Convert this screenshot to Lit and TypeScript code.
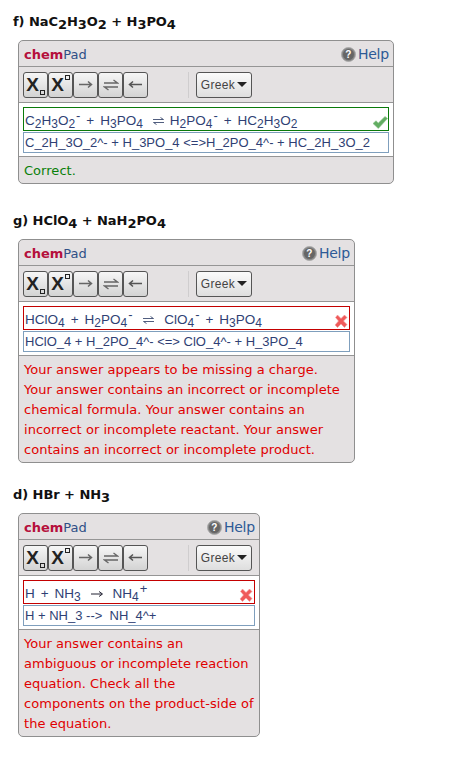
import { LitElement, html, css, svg } from "lit";
import { customElement, property } from "lit/decorators.js";

const eqPath = svg`<path d="M0 2.500H10.500L7.500 .5M11 5.500H.5L3.500 7.500" fill="none" stroke="#3d4c70" stroke-width=".9"/>`;
const eq1 = svg`<svg class="eq1" width="11" height="8" viewBox="0 0 11 8">${eqPath}</svg>`;
const eq2 = svg`<svg class="eq2" width="11" height="8" viewBox="0 0 11 8">${eqPath}</svg>`;
const fwd = svg`<svg class="fw" width="12" height="8" viewBox="0 0 12 8"><path d="M0 4H11M8 1.500L11.500 4L8 6.500" fill="none" stroke="#223" stroke-width="1"/></svg>`;

@customElement("chem-pad")
class ChemPad extends LitElement {
  @property({ type: Number }) w = 376;
  @property() status = "ok";
  static styles = css`
    :host { display: block; }
    .panel { box-sizing: border-box; border: 1px solid #8f8f8f; border-radius: 5px; background: #e4e1e2; overflow: hidden; }
    .head { display: flex; align-items: center; justify-content: space-between; padding: 1px 4px 0 5px; box-sizing: border-box; height: 26px; border-bottom: 1px solid #959595; }
    .brand { font: 13px "DejaVu Sans", sans-serif; color: #2f4f86; }
    .brand b { color: #b5103c; font-weight: bold; }
    .help { display: flex; align-items: center; gap: 2px; font: 14px "DejaVu Sans", sans-serif; color: #2d5a96; letter-spacing: -.2px; }
    .q { width: 15px; height: 15px; border-radius: 50%; background: #666; border: 1px solid #b0b0b0; box-sizing: border-box; color: #fff; font: bold 10px/13px "Liberation Sans", sans-serif; text-align: center; letter-spacing: 0; box-shadow: inset 0 0 0 1px #8a8a8a; }
    .tools { height: 35px; display: flex; align-items: center; padding: 0 4px; border-bottom: 1px solid #959595; }
    .btn { width: 25px; height: 26px; box-sizing: border-box; border: 1px solid #555; border-radius: 3px; background: linear-gradient(#f6f6f6, #d3d3d3); display: flex; align-items: center; justify-content: center; color: #333; }
    .tx { font: bold 19px/22px "Liberation Sans", sans-serif; color: #222; display: flex; height: 22px; }
    .box { width: 3px; height: 3px; border: 1.500px solid #222; display: block; }
    .sub { align-self: flex-end; margin: 0 0 1px 1px; }
    .sup { align-self: flex-start; margin: 1px 0 0 1px; }
    .sep { width: 1px; height: 26px; background: #cfcdce; margin: 0 7px 0 40px; }
    .greek { width: 56px; height: 26px; box-sizing: border-box; border: 1px solid #555; border-radius: 3px; background: linear-gradient(#fbfbfb, #dedede); display: flex; align-items: center; justify-content: center; gap: 2px; font: 12px "Liberation Sans", sans-serif; letter-spacing: .35px; color: #444; }
    .caret { width: 0; height: 0; border-left: 5px solid transparent; border-right: 5px solid transparent; border-top: 5px solid #222; }
    .work { background: #fff; padding: 4px 4px 3px; border-bottom: 1px solid #959595; display: flex; flex-direction: column; gap: 1px; }
    .ren { position: relative; height: 24px; box-sizing: border-box; border: 1px solid #c40000; padding-left: 1px; display: flex; align-items: flex-start; color: #2f3f74; overflow: hidden; }
    .ren.ok { border-color: #0a7a0a; }
    .mark { position: absolute; right: 0; bottom: 0; width: 16px; height: 16px; }
    .src { height: 21px; box-sizing: border-box; border: 1px solid #7f9fbd; padding-left: 1px; font: 13px/19px "Liberation Sans", sans-serif; color: #2f3f74; white-space: pre; overflow: hidden; }
    .msg { padding: 4px 5px 2px; font: 13px/20px "DejaVu Sans", sans-serif; letter-spacing: .04px; color: #e00000; }
    .msg.ok { color: #0a800a; }
  `;
  render() {
    const ok = this.status === "ok";
    return html`<div class="panel" style="width:${this.w}px">
      <div class="head"><div class="brand"><b>chem</b>Pad</div><div class="help"><span class="q">?</span>Help</div></div>
      <div class="tools">
        <div class="btn"><span class="tx">X<i class="box sub"></i></span></div>
        <div class="btn"><span class="tx">X<i class="box sup"></i></span></div>
        <div class="btn">${svg`<svg width="15" height="9" viewBox="0 0 15 9"><path d="M1 4.500H13.500M10 1.500L13.500 4.500L10 7.500" fill="none" stroke="#666" stroke-width="1.500"/></svg>`}</div>
        <div class="btn">${svg`<svg width="16" height="12" viewBox="0 0 16 12"><path d="M1 4H14.500L10.500 1M15 8H1.500L5.500 11" fill="none" stroke="#666" stroke-width="1.300"/></svg>`}</div>
        <div class="btn">${svg`<svg width="15" height="9" viewBox="0 0 15 9"><path d="M14 4.500H1.500M5 1.500L1.500 4.500L5 7.500" fill="none" stroke="#555" stroke-width="1.500"/></svg>`}</div>
        <div class="sep"></div>
        <div class="greek">Greek<i class="caret"></i></div>
      </div>
      <div class="work">
        <div class="ren ${ok ? "ok" : ""}"><slot name="ren"></slot>
          ${ok
            ? svg`<svg class="mark" viewBox="0 0 16 16"><path d="M1 9.500L4 6.800L6.300 9L13 2.500L15.500 4.500L6.300 14.500Z" fill="#62ad62" stroke="#8cc68c" stroke-width=".6"/></svg>`
            : svg`<svg class="mark" viewBox="0 0 16 16"><path d="M2.500 4.500L4.500 2L8 5.500L11.500 2L14 4.500L10.500 8L14 11.500L11.500 14.500L8 11L4.500 14.500L2 12L5.500 8Z" fill="#ef5a5a" stroke="#f7a0a0" stroke-width=".6"/></svg>`}
        </div>
        <div class="src"><slot name="src"></slot></div>
      </div>
      <div class="msg ${ok ? "ok" : ""}"><slot name="msg"></slot></div>
    </div>`;
  }
}

@customElement("app-root")
class AppRoot extends LitElement {
  static styles = css`
    :host { display: block; width: 473px; height: 765px; background: #fff; overflow: hidden; }
    .page { padding: 13px 0 0 13px; display: flex; flex-direction: column; }
    h3 { margin: 0 0 9px; font: bold 13px/18px "DejaVu Sans", sans-serif; color: #111; letter-spacing: -.06px; }
    h3 sub { font-size: 13px; line-height: 0; vertical-align: -3px; }
    chem-pad { margin-left: 5px; }
    .ren { font: 13.500px/25px "Liberation Sans", sans-serif; white-space: pre; word-spacing: 2.200px; }
    .ren sub { font-size: 12px; line-height: 0; vertical-align: -3px; }
    .ren sup { font-size: 13px; line-height: 0; vertical-align: 5px; margin-left: 1px; }
    .eq1 { margin: 0 0 0 4px; }
    .eq2 { margin: 0 -2px 0 -1px; }
    .fw { margin: 0 -2px; }
    .s1 { margin-bottom: 28px; }
    .s2 { margin-bottom: 23px; }
  `;
  render() {
    return html`<div class="page">
      <h3>f) NaC<sub>2</sub>H<sub>3</sub>O<sub>2</sub> + H<sub>3</sub>PO<sub>4</sub></h3>
      <chem-pad class="s1" w="376" status="ok">
        <span slot="ren" class="ren">C<sub>2</sub>H<sub>3</sub>O<sub>2</sub><sup>-</sup> + H<sub>3</sub>PO<sub>4</sub> ${eq1} H<sub>2</sub>PO<sub>4</sub><sup>-</sup> + HC<sub>2</sub>H<sub>3</sub>O<sub>2</sub></span>
        <span slot="src">C_2H_3O_2^- + H_3PO_4 &lt;=&gt;H_2PO_4^- + HC_2H_3O_2</span>
        <span slot="msg">Correct.</span>
      </chem-pad>
      <h3>g) HClO<sub>4</sub> + NaH<sub>2</sub>PO<sub>4</sub></h3>
      <chem-pad class="s2" w="337" status="bad">
        <span slot="ren" class="ren">HClO<sub>4</sub> + H<sub>2</sub>PO<sub>4</sub><sup>-</sup>  ${eq2}  ClO<sub>4</sub><sup>-</sup> + H<sub>3</sub>PO<sub>4</sub></span>
        <span slot="src">HClO_4 + H_2PO_4^- &lt;=&gt; ClO_4^- + H_3PO_4</span>
        <span slot="msg">Your answer appears to be missing a charge. Your answer contains an incorrect or incomplete chemical formula. Your answer contains an incorrect or incomplete reactant. Your answer contains an incorrect or incomplete product.</span>
      </chem-pad>
      <h3>d) HBr + NH<sub>3</sub></h3>
      <chem-pad w="242" status="bad">
        <span slot="ren" class="ren">H + NH<sub>3</sub>  ${fwd}  NH<sub>4</sub><sup>+</sup></span>
        <span slot="src">H + NH_3 --&gt;  NH_4^+</span>
        <span slot="msg">Your answer contains an ambiguous or incomplete reaction equation. Check all the components on the product-side of the equation.</span>
      </chem-pad>
    </div>`;
  }
}
